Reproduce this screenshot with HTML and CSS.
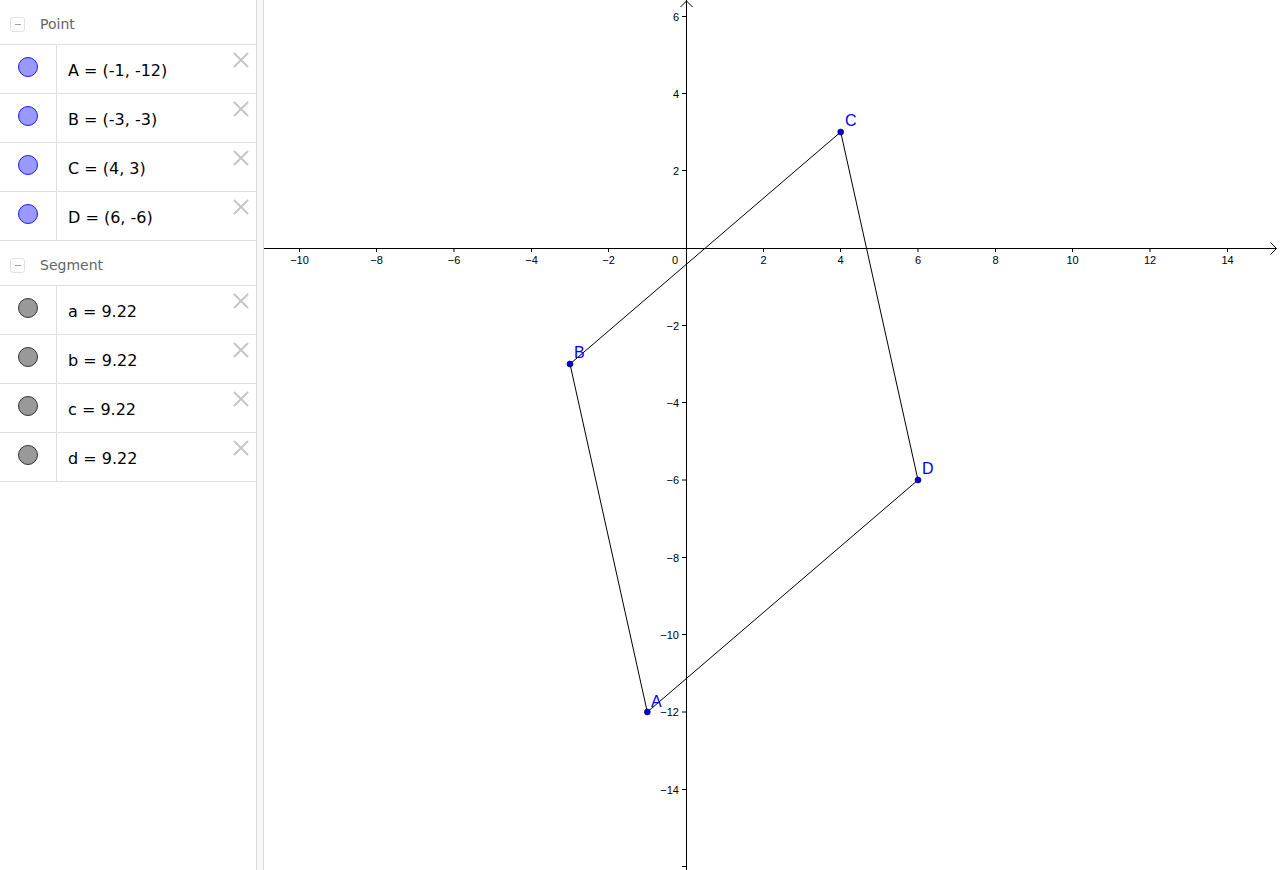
FILE: index.html
```html
<!DOCTYPE html>
<html>
<head>
<meta charset="utf-8">
<link rel="stylesheet" href="styles.css">
</head>
<body>
<div class="app">
  <aside class="algebra">
    <div class="group-head"><span class="toggle"><span class="minus"></span></span><span class="group-title">Point</span></div>
    <div class="item"><div class="marble-col"><span class="marble point"></span></div><div class="item-body"><span class="formula">A = (-1, -12)</span><span class="del"><svg viewBox="0 0 16 16" width="16" height="16"><path d="M1 1 L15 15 M15 1 L1 15"/></svg></span></div></div>
    <div class="item"><div class="marble-col"><span class="marble point"></span></div><div class="item-body"><span class="formula">B = (-3, -3)</span><span class="del"><svg viewBox="0 0 16 16" width="16" height="16"><path d="M1 1 L15 15 M15 1 L1 15"/></svg></span></div></div>
    <div class="item"><div class="marble-col"><span class="marble point"></span></div><div class="item-body"><span class="formula">C = (4, 3)</span><span class="del"><svg viewBox="0 0 16 16" width="16" height="16"><path d="M1 1 L15 15 M15 1 L1 15"/></svg></span></div></div>
    <div class="item"><div class="marble-col"><span class="marble point"></span></div><div class="item-body"><span class="formula">D = (6, -6)</span><span class="del"><svg viewBox="0 0 16 16" width="16" height="16"><path d="M1 1 L15 15 M15 1 L1 15"/></svg></span></div></div>
    <div class="group-head"><span class="toggle"><span class="minus"></span></span><span class="group-title">Segment</span></div>
    <div class="item"><div class="marble-col"><span class="marble segment"></span></div><div class="item-body"><span class="formula">a = 9.22</span><span class="del"><svg viewBox="0 0 16 16" width="16" height="16"><path d="M1 1 L15 15 M15 1 L1 15"/></svg></span></div></div>
    <div class="item"><div class="marble-col"><span class="marble segment"></span></div><div class="item-body"><span class="formula">b = 9.22</span><span class="del"><svg viewBox="0 0 16 16" width="16" height="16"><path d="M1 1 L15 15 M15 1 L1 15"/></svg></span></div></div>
    <div class="item"><div class="marble-col"><span class="marble segment"></span></div><div class="item-body"><span class="formula">c = 9.22</span><span class="del"><svg viewBox="0 0 16 16" width="16" height="16"><path d="M1 1 L15 15 M15 1 L1 15"/></svg></span></div></div>
    <div class="item"><div class="marble-col"><span class="marble segment"></span></div><div class="item-body"><span class="formula">d = 9.22</span><span class="del"><svg viewBox="0 0 16 16" width="16" height="16"><path d="M1 1 L15 15 M15 1 L1 15"/></svg></span></div></div>
  </aside>
  <div class="splitter"></div>
  <main class="graphics">
    <svg class="plot" viewBox="264 0 1016 870" width="1016" height="870">
      <g class="axes">
        <line x1="264" y1="248.5" x2="1276" y2="248.5"/>
        <line x1="686.5" y1="0" x2="686.5" y2="870"/>
        <polyline class="arrow" points="1270.5,242.5 1276.5,248.5 1270.5,254.5"/>
        <polyline class="arrow" points="680.5,7 686.5,1 692.5,7"/>
        <g class="ticks">
          <line x1="299.5" y1="248" x2="299.5" y2="252"/>
          <line x1="376.5" y1="248" x2="376.5" y2="252"/>
          <line x1="454" y1="248" x2="454" y2="252"/>
          <line x1="531.5" y1="248" x2="531.5" y2="252"/>
          <line x1="608.5" y1="248" x2="608.5" y2="252"/>
          <line x1="763.5" y1="248" x2="763.5" y2="252"/>
          <line x1="840.5" y1="248" x2="840.5" y2="252"/>
          <line x1="918" y1="248" x2="918" y2="252"/>
          <line x1="995.5" y1="248" x2="995.5" y2="252"/>
          <line x1="1072.5" y1="248" x2="1072.5" y2="252"/>
          <line x1="1150" y1="248" x2="1150" y2="252"/>
          <line x1="1227.5" y1="248" x2="1227.5" y2="252"/>
          <line x1="682" y1="16.5" x2="686" y2="16.5"/>
          <line x1="682" y1="93.5" x2="686" y2="93.5"/>
          <line x1="682" y1="170.5" x2="686" y2="170.5"/>
          <line x1="682" y1="325.5" x2="686" y2="325.5"/>
          <line x1="682" y1="402.5" x2="686" y2="402.5"/>
          <line x1="682" y1="480" x2="686" y2="480"/>
          <line x1="682" y1="557.5" x2="686" y2="557.5"/>
          <line x1="682" y1="634.5" x2="686" y2="634.5"/>
          <line x1="682" y1="712" x2="686" y2="712"/>
          <line x1="682" y1="789.5" x2="686" y2="789.5"/>
          <line x1="682" y1="866.5" x2="686" y2="866.5"/>
        </g>
        <g class="xlabels">
          <text x="299.5" y="264">−10</text>
          <text x="376.5" y="264">−8</text>
          <text x="454" y="264">−6</text>
          <text x="531.5" y="264">−4</text>
          <text x="608.5" y="264">−2</text>
          <text x="763.5" y="264">2</text>
          <text x="840.5" y="264">4</text>
          <text x="918" y="264">6</text>
          <text x="995.5" y="264">8</text>
          <text x="1072.5" y="264">10</text>
          <text x="1150" y="264">12</text>
          <text x="1227.5" y="264">14</text>
          <text x="675" y="264">0</text>
        </g>
        <g class="ylabels">
          <text x="679" y="21">6</text>
          <text x="679" y="98">4</text>
          <text x="679" y="175">2</text>
          <text x="679" y="330">−2</text>
          <text x="679" y="407">−4</text>
          <text x="679" y="484">−6</text>
          <text x="679" y="562">−8</text>
          <text x="679" y="639">−10</text>
          <text x="679" y="716">−12</text>
          <text x="679" y="794">−14</text>
        </g>
      </g>
      <g class="segments">
        <line x1="647.3" y1="712" x2="570" y2="364"/>
        <line x1="570" y1="364" x2="840.7" y2="132"/>
        <line x1="840.7" y1="132" x2="918" y2="480"/>
        <line x1="918" y1="480" x2="647.3" y2="712"/>
      </g>
      <g class="points">
        <circle cx="647.3" cy="712" r="3"/>
        <circle cx="570" cy="364" r="3"/>
        <circle cx="840.7" cy="132" r="3"/>
        <circle cx="918" cy="480" r="3"/>
      </g>
      <g class="plabels">
        <text x="651" y="707">A</text>
        <text x="574" y="358">B</text>
        <text x="845" y="126">C</text>
        <text x="922" y="474">D</text>
      </g>
    </svg>
  </main>
</div>
</body>
</html>
```
FILE: styles.css
```css
html, body {
  margin: 0;
  padding: 0;
  background: #fff;
}
body {
  width: 1280px;
  height: 870px;
  overflow: hidden;
  font-family: "DejaVu Sans", sans-serif;
}
.app {
  display: flex;
  height: 870px;
}
.algebra {
  width: 256px;
  flex: none;
  border-right: 1px solid #dcdcdc;
  background: #fff;
}
.splitter {
  width: 6px;
  flex: none;
  background: #f8f8f8;
  border-right: 1px solid #dcdcdc;
}
.graphics {
  flex: 1;
  position: relative;
  overflow: hidden;
}
.plot {
  display: block;
}
.group-head {
  height: 44px;
  border-bottom: 1px solid #e0e0e0;
  display: flex;
  align-items: flex-start;
}
.toggle {
  box-sizing: border-box;
  width: 15px;
  height: 15px;
  margin: 17px 0 0 10px;
  border: 1px solid #e2e2e2;
  border-radius: 3px;
  display: flex;
  align-items: center;
  justify-content: center;
}
.minus {
  width: 6px;
  height: 1px;
  background: #a0a0a0;
}
.group-title {
  margin: 15px 0 0 15px;
  font-size: 14px;
  line-height: 18px;
  color: #666;
}
.item {
  height: 48px;
  border-bottom: 1px solid #e0e0e0;
  display: flex;
}
.marble-col {
  width: 56px;
  flex: none;
  border-right: 1px solid #e0e0e0;
  display: flex;
  justify-content: center;
  align-items: flex-start;
}
.marble {
  box-sizing: border-box;
  width: 20px;
  height: 20px;
  margin-top: 12px;
  border-radius: 50%;
}
.marble.point {
  background: #9999ff;
  border: 1px solid #1a1aff;
}
.marble.segment {
  background: #999;
  border: 1px solid #333;
}
.item-body {
  flex: 1;
  display: flex;
  justify-content: space-between;
  align-items: flex-start;
  padding-left: 11px;
}
.formula {
  margin-top: 16px;
  font-size: 16px;
  line-height: 20px;
  color: #000;
}
.del {
  width: 16px;
  height: 16px;
  margin: 7px 7px 0 0;
}
.del svg {
  display: block;
}
.del path {
  stroke: #c4c4c4;
  stroke-width: 1.8;
  fill: none;
}
.axes line {
  stroke: #000;
  stroke-width: 1;
}
.arrow {
  fill: none;
  stroke: #000;
  stroke-width: 1;
}
.xlabels text {
  font-family: "Liberation Sans", Arial, sans-serif;
  font-size: 11px;
  text-anchor: middle;
  fill: #000;
}
.ylabels text {
  font-family: "Liberation Sans", Arial, sans-serif;
  font-size: 11px;
  text-anchor: end;
  fill: #000;
}
.segments line {
  stroke: #000;
  stroke-width: 1;
}
.points circle {
  fill: #0000e6;
  stroke: #000033;
  stroke-width: 0.6;
}
.plabels text {
  font-family: "Liberation Sans", Arial, sans-serif;
  font-size: 16px;
  fill: #0000ff;
}
```
